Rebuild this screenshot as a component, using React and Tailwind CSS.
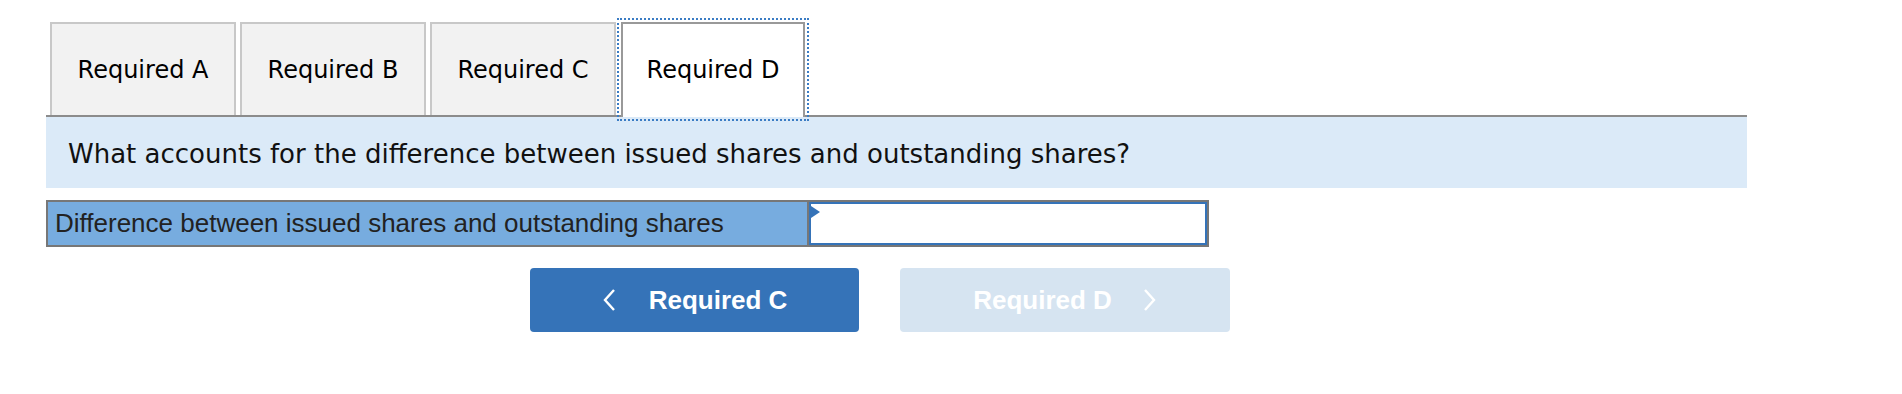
import React from 'react';

const tabs = ['Required A', 'Required B', 'Required C'];

const Chevron = ({ dir }) => (
  <svg width="15" height="26" viewBox="0 0 15 26" fill="none">
    <polyline
      points={dir === 'left' ? '12,3 3,13 12,23' : '3,3 12,13 3,23'}
      stroke="white"
      strokeWidth="2.4"
    />
  </svg>
);

const App = () => {
  return (
    <div className="w-full h-[394px] bg-white pl-[46px] pt-[18px]">
      <div className="w-[1701px]">
        {/* tabs */}
        <div className="flex items-end pl-[4px] h-[99px] border-b-2 border-[#8c8c8c] font-['DejaVu_Sans',sans-serif] text-[24px] text-black">
          {tabs.map((t, i) => (
            <div
              key={t}
              className={`w-[186px] h-[93px] flex items-center justify-center bg-[#f2f2f2] border-2 border-b-0 border-[#c8c8c8] ${i > 0 ? 'ml-[4px]' : ''}`}
            >
              {t}
            </div>
          ))}
          <div className="ml-[5px] -mb-[2px] w-[184px] h-[95px] flex items-center justify-center pb-[2px] bg-white border-2 border-b-0 border-[#999] outline-2 outline-dotted outline-[#3b7cc4] outline-offset-[2px]">
            Required D
          </div>
        </div>

        {/* question */}
        <div className="h-[71px] bg-[#dbeaf8] flex items-center pl-[22px] pt-[4px] font-['DejaVu_Sans',sans-serif] text-[26px] text-[#111]">
          What accounts for the difference between issued shares and outstanding shares?
        </div>

        {/* answer row */}
        <div className="mt-[12px] flex w-[1163px] h-[47px] border-2 border-[#777]">
          <div className="w-[759px] bg-[#77acdf] flex items-center pl-[7px] font-['Liberation_Sans',Arial,sans-serif] text-[26px] text-[#222]">
            Difference between issued shares and outstanding shares
          </div>
          <div className="relative flex-1 border-l-2 border-[#777]">
            <div className="w-full h-full border-2 border-[#3573b8] bg-white"></div>
            <div className="absolute left-[2px] top-[4px] w-0 h-0 border-y-[6px] border-y-transparent border-l-[9px] border-l-[#3573b8]"></div>
          </div>
        </div>

        {/* nav buttons */}
        <div className="mt-[21px] flex gap-[41px] pl-[484px] font-['Liberation_Sans',Arial,sans-serif] text-[26px] font-bold text-white">
          <button className="w-[329px] h-[64px] rounded-[4px] bg-[#3573b8] flex items-center justify-center gap-[32px]">
            <Chevron dir="left" />
            <span>Required C</span>
          </button>
          <button className="w-[330px] h-[64px] rounded-[4px] bg-[#d6e4f1] flex items-center justify-center gap-[30px]">
            <span>Required D</span>
            <Chevron dir="right" />
          </button>
        </div>
      </div>
    </div>
  );
};

export default App;
